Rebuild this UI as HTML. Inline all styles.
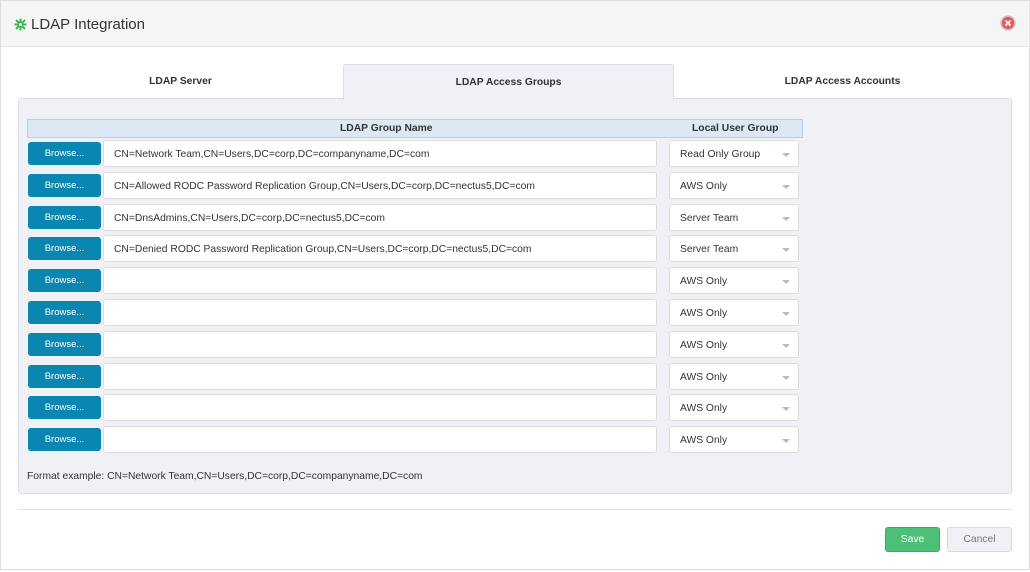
<!DOCTYPE html>
<html><head><style>
*{box-sizing:border-box;margin:0;padding:0}
body{width:1030px;height:572px;background:#fff;font-family:"Liberation Sans",sans-serif;font-size:10.3px;color:#333;position:relative;overflow:hidden}
.outer{position:absolute;left:0;top:0;width:1030px;height:570px;border:1px solid #ddd;}
.hdr{position:absolute;left:1px;top:1px;width:1027px;height:46px;background:#f5f5f5;border-bottom:1px solid #e4e4e4}
.hdr .t{position:absolute;left:30px;top:15px;font-size:15px;color:#333}
.tab{position:absolute;top:64px;height:35px;line-height:35px;text-align:center;font-weight:bold;font-size:10.3px;color:#333}
.panel{position:absolute;left:18px;top:98px;width:994px;height:396px;background:#eff1f7;border:1px solid #d8dde8;border-radius:3px}
.act{background:#eff1f7;border:1px solid #d8dde8;border-bottom:none;border-radius:3px 3px 0 0;z-index:2}
.th{position:absolute;left:27px;top:119px;width:776px;height:19px;background:#dce9f5;border:1px solid #b9cfe6;font-weight:bold}
.btn{position:absolute;left:28px;width:73px;height:23px;background:#0a87b1;color:#fff;border-radius:3px;text-align:center;line-height:24px;font-size:9.5px}
.in{position:absolute;left:103px;width:554px;height:27px;background:#fff;border:1px solid #dcdcdc;border-radius:3px;padding-left:10px;line-height:27px}
.sel{position:absolute;left:669px;width:130px;height:27px;background:#fff;border:1px solid #dcdcdc;border-radius:3px;padding-left:10px;line-height:27px}
.sel:after{content:"";position:absolute;right:8px;top:12px;border:4px solid transparent;border-top:4px solid #bbb}
</style></head><body>
<div class="outer"></div>
<div class="hdr">
<svg style="position:absolute;left:13px;top:17px" width="13" height="13" viewBox="0 0 13 13"><circle cx="6.5" cy="6.5" r="3" fill="#3cb54a"/><g stroke="#3cb54a" stroke-width="2"><line x1="6.5" y1="0.5" x2="6.5" y2="12.5"/><line x1="0.5" y1="6.5" x2="12.5" y2="6.5"/><line x1="2" y1="2" x2="11" y2="11"/><line x1="11" y1="2" x2="2" y2="11"/></g><circle cx="6.5" cy="6.5" r="1.5" fill="#fff"/></svg>
<div class="t">LDAP Integration</div>
<svg style="position:absolute;left:999px;top:14px" width="16" height="16" viewBox="0 0 16 16"><circle cx="8" cy="8" r="7" fill="#e85a5f" stroke="#ccc" stroke-width="1.5"/><path d="M5.5 5.5l5 5M10.5 5.5l-5 5" stroke="#fff" stroke-width="1.8"/></svg>
</div>
<div class="tab" style="left:18px;width:325px">LDAP Server</div>
<div class="tab act" style="left:343px;width:331px;height:36px">LDAP Access Groups</div>
<div class="tab" style="left:674px;width:337px">LDAP Access Accounts</div>
<div class="panel"></div>
<div class="th"><span style="position:absolute;left:312px;top:3px">LDAP Group Name</span><span style="position:absolute;left:664px;top:3px">Local User Group</span></div>
<div id="rows"></div>
<div style="position:absolute;left:27px;top:471px">Format example: CN=Network Team,CN=Users,DC=corp,DC=companyname,DC=com</div>
<div style="position:absolute;left:18px;top:509px;width:994px;border-top:1px solid #e2e2e2"></div>
<div style="position:absolute;left:885px;top:527px;width:55px;height:25px;background:#4cc076;border:1px solid #3fa865;border-radius:3px;color:#fff;text-align:center;line-height:24px">Save</div>
<div style="position:absolute;left:947px;top:527px;width:65px;height:25px;background:#eff1f7;border:1px solid #d4d8e2;border-radius:3px;color:#777;text-align:center;line-height:24px">Cancel</div>
<script>
var d=[["CN=Network Team,CN=Users,DC=corp,DC=companyname,DC=com","Read Only Group"],["CN=Allowed RODC Password Replication Group,CN=Users,DC=corp,DC=nectus5,DC=com","AWS Only"],["CN=DnsAdmins,CN=Users,DC=corp,DC=nectus5,DC=com","Server Team"],["CN=Denied RODC Password Replication Group,CN=Users,DC=corp,DC=nectus5,DC=com","Server Team"]];
var h="";for(var i=0;i<10;i++){var y=140+i*31.8;var r=d[i]||["","AWS Only"];
h+='<div class="btn" style="top:'+(y+2)+'px">Browse...</div><div class="in" style="top:'+y+'px">'+r[0]+'</div><div class="sel" style="top:'+y+'px">'+r[1]+'</div>';}
document.getElementById("rows").innerHTML=h;
</script>
</body></html>
